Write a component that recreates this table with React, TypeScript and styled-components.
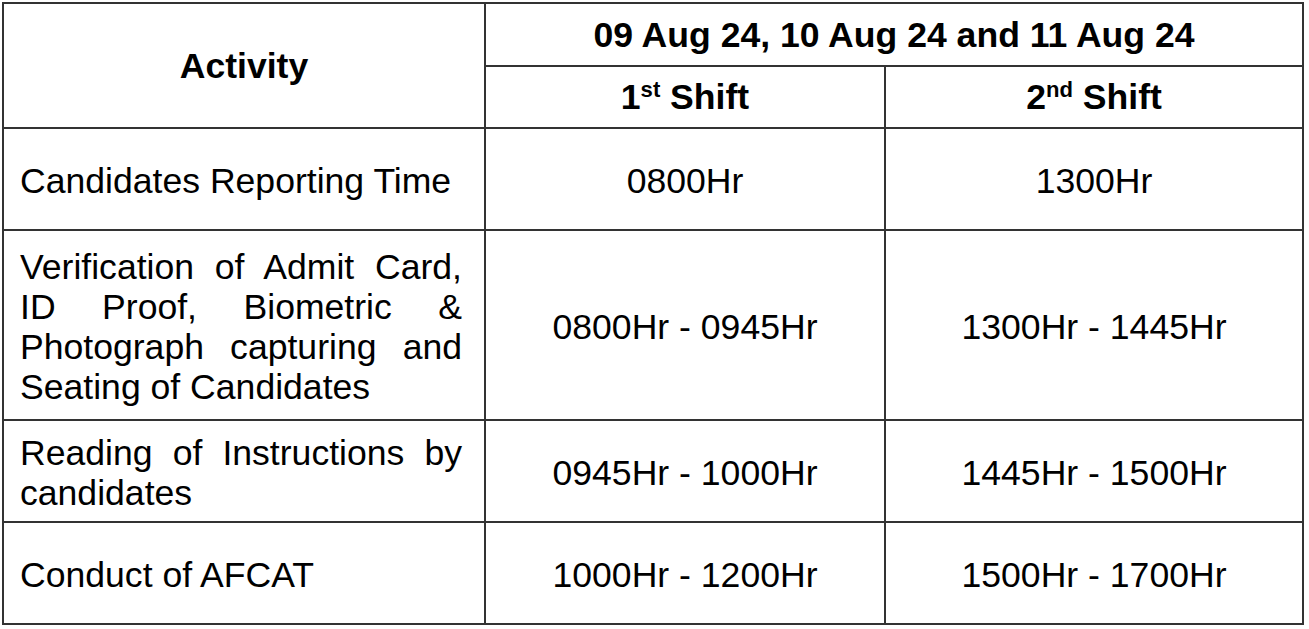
import styled, { createGlobalStyle } from 'styled-components';

const GlobalStyle = createGlobalStyle`
  html, body {
    margin: 0;
    padding: 0;
    background: #ffffff;
  }
  body {
    font-family: "Liberation Sans", Arial, sans-serif;
    color: #000000;
  }
`;

const Table = styled.table`
  border-collapse: separate;
  border-spacing: 0;
  margin: 2px 0 0 2px;
  border-top: 2px solid #333333;
  border-left: 2px solid #333333;
  table-layout: fixed;
  font-size: 35.6px;
  line-height: 40px;
`;

const Cell = styled.td<{ $align?: 'left' | 'center'; $height?: number; $bold?: boolean }>`
  box-sizing: border-box;
  border-right: 2px solid #333333;
  border-bottom: 2px solid #333333;
  padding: ${p => (p.$bold ? '0 4px' : p.$align === 'left' ? '4px 22px 0 16px' : '4px 4px 0')};
  height: ${p => p.$height ?? 102}px;
  text-align: ${p => (p.$align === 'left' ? 'justify' : 'center')};
  text-align-last: ${p => (p.$align === 'left' ? 'left' : 'center')};
  vertical-align: middle;
  font-weight: ${p => (p.$bold ? 700 : 400)};
`;

const Sup = styled.sup`
  font-size: 0.62em;
  line-height: 0;
  vertical-align: 0.55em;
`;

interface Row {
  activity: string;
  first: string;
  second: string;
  height?: number;
}

const rows: Row[] = [
  { activity: 'Candidates Reporting Time', first: '0800Hr', second: '1300Hr' },
  {
    activity: 'Verification of Admit Card, ID Proof, Biometric & Photograph capturing and Seating of Candidates',
    first: '0800Hr - 0945Hr',
    second: '1300Hr - 1445Hr',
    height: 190,
  },
  { activity: 'Reading of Instructions by candidates', first: '0945Hr - 1000Hr', second: '1445Hr - 1500Hr' },
  { activity: 'Conduct of AFCAT', first: '1000Hr - 1200Hr', second: '1500Hr - 1700Hr' },
];

export default function App() {
  return (
    <>
      <GlobalStyle />
      <Table>
        <colgroup>
          <col style={{ width: 482 }} />
          <col style={{ width: 400 }} />
          <col style={{ width: 418 }} />
        </colgroup>
        <thead>
          <tr>
            <Cell as="th" rowSpan={2} $bold $height={125}>
              Activity
            </Cell>
            <Cell as="th" colSpan={2} $bold $height={63}>
              09 Aug 24, 10 Aug 24 and 11 Aug 24
            </Cell>
          </tr>
          <tr>
            <Cell as="th" $bold $height={62}>
              1<Sup>st</Sup> Shift
            </Cell>
            <Cell as="th" $bold $height={62}>
              2<Sup>nd</Sup> Shift
            </Cell>
          </tr>
        </thead>
        <tbody>
          {rows.map(r => (
            <tr key={r.activity}>
              <Cell $align="left" $height={r.height}>
                {r.activity}
              </Cell>
              <Cell $height={r.height}>{r.first}</Cell>
              <Cell $height={r.height}>{r.second}</Cell>
            </tr>
          ))}
        </tbody>
      </Table>
    </>
  );
}
